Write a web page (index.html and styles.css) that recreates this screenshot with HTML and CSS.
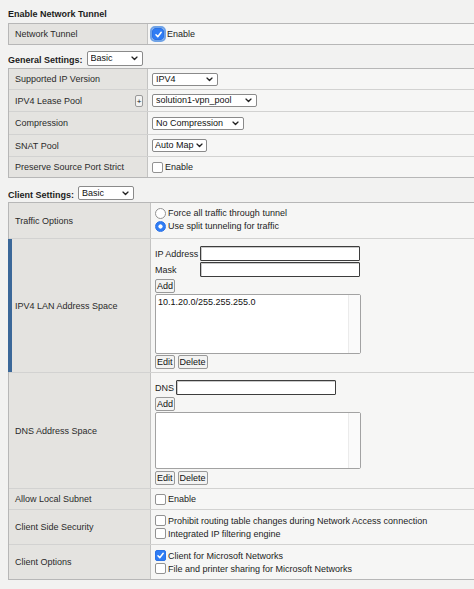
FILE: index.html
```html
<!DOCTYPE html>
<html lang="en">
<head>
<meta charset="utf-8">
<title>Network Access</title>
<link rel="stylesheet" href="styles.css">
</head>
<body>
  <div class="heading">Enable Network Tunnel</div>
  <div class="tbl t1">
    <div class="row">
      <div class="label">Network Tunnel</div>
      <div class="value v-tight"><label class="opt"><input type="checkbox" class="cb cb-focus" checked>Enable</label></div>
    </div>
  </div>

  <div class="bar bar-general">
    <span class="bar-title">General Settings:</span>
    <select class="sel w-basic"><option>Basic</option></select>
  </div>
  <div class="tbl t2">
    <div class="row">
      <div class="label">Supported IP Version</div>
      <div class="value"><select class="sel w-ipv"><option>IPV4</option></select></div>
    </div>
    <div class="row">
      <div class="label"><span>IPV4 Lease Pool</span><button class="plus" type="button">+</button></div>
      <div class="value"><select class="sel w-pool"><option>solution1-vpn_pool</option></select></div>
    </div>
    <div class="row h22">
      <div class="label">Compression</div>
      <div class="value"><select class="sel w-comp"><option>No Compression</option></select></div>
    </div>
    <div class="row">
      <div class="label">SNAT Pool</div>
      <div class="value"><select class="sel w-snat"><option>Auto Map</option></select></div>
    </div>
    <div class="row">
      <div class="label">Preserve Source Port Strict</div>
      <div class="value"><label class="opt"><input type="checkbox" class="cb">Enable</label></div>
    </div>
  </div>

  <div class="bar bar-client">
    <span class="bar-title">Client Settings:</span>
    <select class="sel w-basic"><option>Basic</option></select>
  </div>
  <div class="tbl t3">
    <div class="row h35">
      <div class="label">Traffic Options</div>
      <div class="value v-traffic">
        <label class="opt"><input type="radio" name="traffic" class="rb">Force all traffic through tunnel</label>
        <label class="opt"><input type="radio" name="traffic" class="rb" checked>Use split tunneling for traffic</label>
      </div>
    </div>
    <div class="row h133">
      <div class="label marked">IPV4 LAN Address Space</div>
      <div class="value stack">
        <div class="field f-ip">
          <span>IP Address</span><input class="txt" type="text">
        </div>
        <div class="field f-ip f-mask">
          <span>Mask</span><input class="txt" type="text">
        </div>
        <button class="btn add-ip" type="button">Add</button>
        <div class="list list-ip">
          <div class="list-body">10.1.20.0/255.255.255.0</div>
          <div class="list-track"></div>
        </div>
        <div class="btns">
          <button class="btn" type="button">Edit</button>
          <button class="btn" type="button">Delete</button>
        </div>
      </div>
    </div>
    <div class="row h115">
      <div class="label">DNS Address Space</div>
      <div class="value stack">
        <div class="field f-dns">
          <span>DNS</span><input class="txt" type="text">
        </div>
        <button class="btn add-dns" type="button">Add</button>
        <div class="list list-dns">
          <div class="list-body"></div>
          <div class="list-track"></div>
        </div>
        <div class="btns btns-dns">
          <button class="btn" type="button">Edit</button>
          <button class="btn" type="button">Delete</button>
        </div>
      </div>
    </div>
    <div class="row h20">
      <div class="label">Allow Local Subnet</div>
      <div class="value"><label class="opt"><input type="checkbox" class="cb">Enable</label></div>
    </div>
    <div class="row h34">
      <div class="label">Client Side Security</div>
      <div class="value">
        <label class="opt"><input type="checkbox" class="cb">Prohibit routing table changes during Network Access connection</label>
        <label class="opt"><input type="checkbox" class="cb">Integrated IP filtering engine</label>
      </div>
    </div>
    <div class="row h34">
      <div class="label">Client Options</div>
      <div class="value">
        <label class="opt"><input type="checkbox" class="cb" checked>Client for Microsoft Networks</label>
        <label class="opt"><input type="checkbox" class="cb">File and printer sharing for Microsoft Networks</label>
      </div>
    </div>
  </div>
</body>
</html>
```

FILE: styles.css
```css
html {
  background: #f2f2f1;
}

body {
  margin: 0 0 0 8px;
  font-family: "Liberation Sans", Arial, Helvetica, sans-serif;
  font-size: 9px;
  color: #1c1c1c;
  overflow: hidden;
}

.heading {
  box-sizing: border-box;
  height: 23px;
  padding-top: 8px;
  line-height: 12px;
  font-weight: bold;
}

/* section bars */
.bar {
  display: flex;
  align-items: flex-end;
  gap: 4px;
  box-sizing: border-box;
}
.bar-title {
  font-weight: bold;
  line-height: 11px;
}
.bar-general {
  height: 23px;
}
.bar-general .bar-title { margin-bottom: 2px; }
.bar-general .sel { margin-bottom: 2px; height: 15px; }

.bar-client {
  height: 24px;
}
.bar-client .bar-title { margin-bottom: 1px; }
.bar-client .sel { margin-bottom: 2px; height: 14px; }

/* tables */
.tbl {
  border: 1px solid #b7b7b7;
  border-right: none;
  background: #f6f6f5;
}
.row {
  display: grid;
  grid-template-columns: 139px 1fr;
  height: 21px;
  border-top: 1px solid #d2d2d1;
}
.row:first-child {
  border-top: none;
}
.t1 .row { height: 20px; }
.t2 .row:first-child,
.t2 .row:last-child { height: 20px; }
.t2 .row.h22 { height: 22px; }

.t3 .row { grid-template-columns: 142px 1fr; }
.t3 .row.h35 { height: 35px; }
.t3 .row.h133 { height: 133px; }
.t3 .row.h115 { height: 115px; }
.t3 .row.h20 { height: 20px; }
.t3 .row.h34 { height: 34px; }

.label {
  display: flex;
  align-items: center;
  justify-content: space-between;
  padding: 0 4px 0 6px;
  background: #e4e3e0;
  border-right: 1px solid #c3c3c2;
  color: #2a2a2a;
}
.label.marked {
  margin-left: -1px;
  padding-left: 3px;
  border-left: 4px solid #3b6899;
}

.value {
  display: flex;
  flex-direction: column;
  justify-content: center;
  align-items: flex-start;
  padding-left: 4px;
  min-width: 0;
}
.value.v-tight { padding-left: 2px; }
.value.v-traffic { padding-bottom: 2px; }
.value.stack {
  justify-content: flex-start;
  padding-top: 7px;
}

/* options */
.opt {
  display: flex;
  align-items: center;
  height: 13px;
  white-space: nowrap;
}

.cb,
.rb {
  -webkit-appearance: none;
  appearance: none;
  flex: none;
  box-sizing: border-box;
  width: 11px;
  height: 11px;
  margin: 0 2px 0 0;
  border: 1px solid #929292;
  background: #fff;
}
.cb { border-radius: 2px; }
.cb:checked {
  border-color: #2b72e6;
  background: #2f7cf4 url("data:image/svg+xml;utf8,<svg xmlns='http://www.w3.org/2000/svg' viewBox='0 0 10 10'><path d='M2.2 5.3 L4.2 7.4 L8 2.6' fill='none' stroke='white' stroke-width='1.7' stroke-linecap='round' stroke-linejoin='round'/></svg>") center / 9px 9px no-repeat;
}
.cb.cb-focus {
  width: 12px;
  height: 12px;
  margin: 0 3px 0 2px;
  border-radius: 3px;
  outline: 2px solid #6fa2e6;
  outline-offset: 0;
}
.rb { border-radius: 50%; }
.rb:checked {
  border-color: #2b72e6;
  background: radial-gradient(circle, #fff 0 1.8px, #2f7cf4 2.4px);
}

/* selects */
.sel {
  -webkit-appearance: none;
  appearance: none;
  box-sizing: border-box;
  height: 13px;
  margin: 0;
  padding: 0 11px 0 3px;
  border: 1px solid #8a8a8a;
  border-radius: 2px;
  font-family: inherit;
  font-size: 9px;
  line-height: 11px;
  color: #111;
  background: #fff url("data:image/svg+xml;utf8,<svg xmlns='http://www.w3.org/2000/svg' viewBox='0 0 8 6'><path d='M1 1.3 L4 4.3 L7 1.3' fill='none' stroke='%23222' stroke-width='1.6' stroke-linecap='round' stroke-linejoin='round'/></svg>") right 4px center / 7px 5px no-repeat;
}
.w-basic { width: 56px; }
.w-ipv { width: 66px; }
.w-pool { width: 105px; }
.w-comp { width: 92px; }
.w-snat {
  width: 55px;
  padding-left: 2px;
  padding-right: 9px;
  background-position: right 3px center;
}

/* buttons */
.btn,
.plus {
  box-sizing: border-box;
  margin: 0;
  border: 1px solid #999;
  border-radius: 2px;
  background: #f3f3f2;
  color: #111;
  font-family: inherit;
  font-size: 9px;
  line-height: 11px;
}
.btn {
  height: 14px;
  padding: 0 1px;
}
.plus {
  width: 8px;
  height: 12px;
  padding: 0;
  font-size: 8px;
  text-align: center;
}

/* fields */
.field {
  display: grid;
  align-items: center;
  height: 15px;
}
.f-ip { grid-template-columns: 45px 160px; }
.f-mask { margin-top: 1px; }
.f-dns { grid-template-columns: 21px 160px; }

.txt {
  box-sizing: border-box;
  width: 160px;
  height: 15px;
  margin: 0;
  padding: 0 2px;
  border: 1px solid #3d3d3d;
  border-radius: 1px;
  background: #fff;
  box-shadow: inset 1px 1px 0 #c9c9c9;
  font-family: inherit;
  font-size: 9px;
}

.add-ip { margin-top: 2px; }
.add-dns { margin-top: 2px; }

.list {
  display: flex;
  box-sizing: border-box;
  width: 206px;
  margin-top: 1px;
  border: 1px solid #a2a2a2;
  border-radius: 2px;
  background: #fff;
}
.list-ip { height: 60px; }
.list-dns { height: 57px; }
.list-body {
  flex: 1;
  padding: 2px 2px;
  line-height: 10px;
  color: #111;
}
.list-track {
  width: 11px;
  border-left: 1px solid #ebebeb;
  background: #fafafa;
}

.btns {
  display: flex;
  gap: 3px;
  margin-top: 1px;
}
.btns-dns { margin-top: 2px; }
```
